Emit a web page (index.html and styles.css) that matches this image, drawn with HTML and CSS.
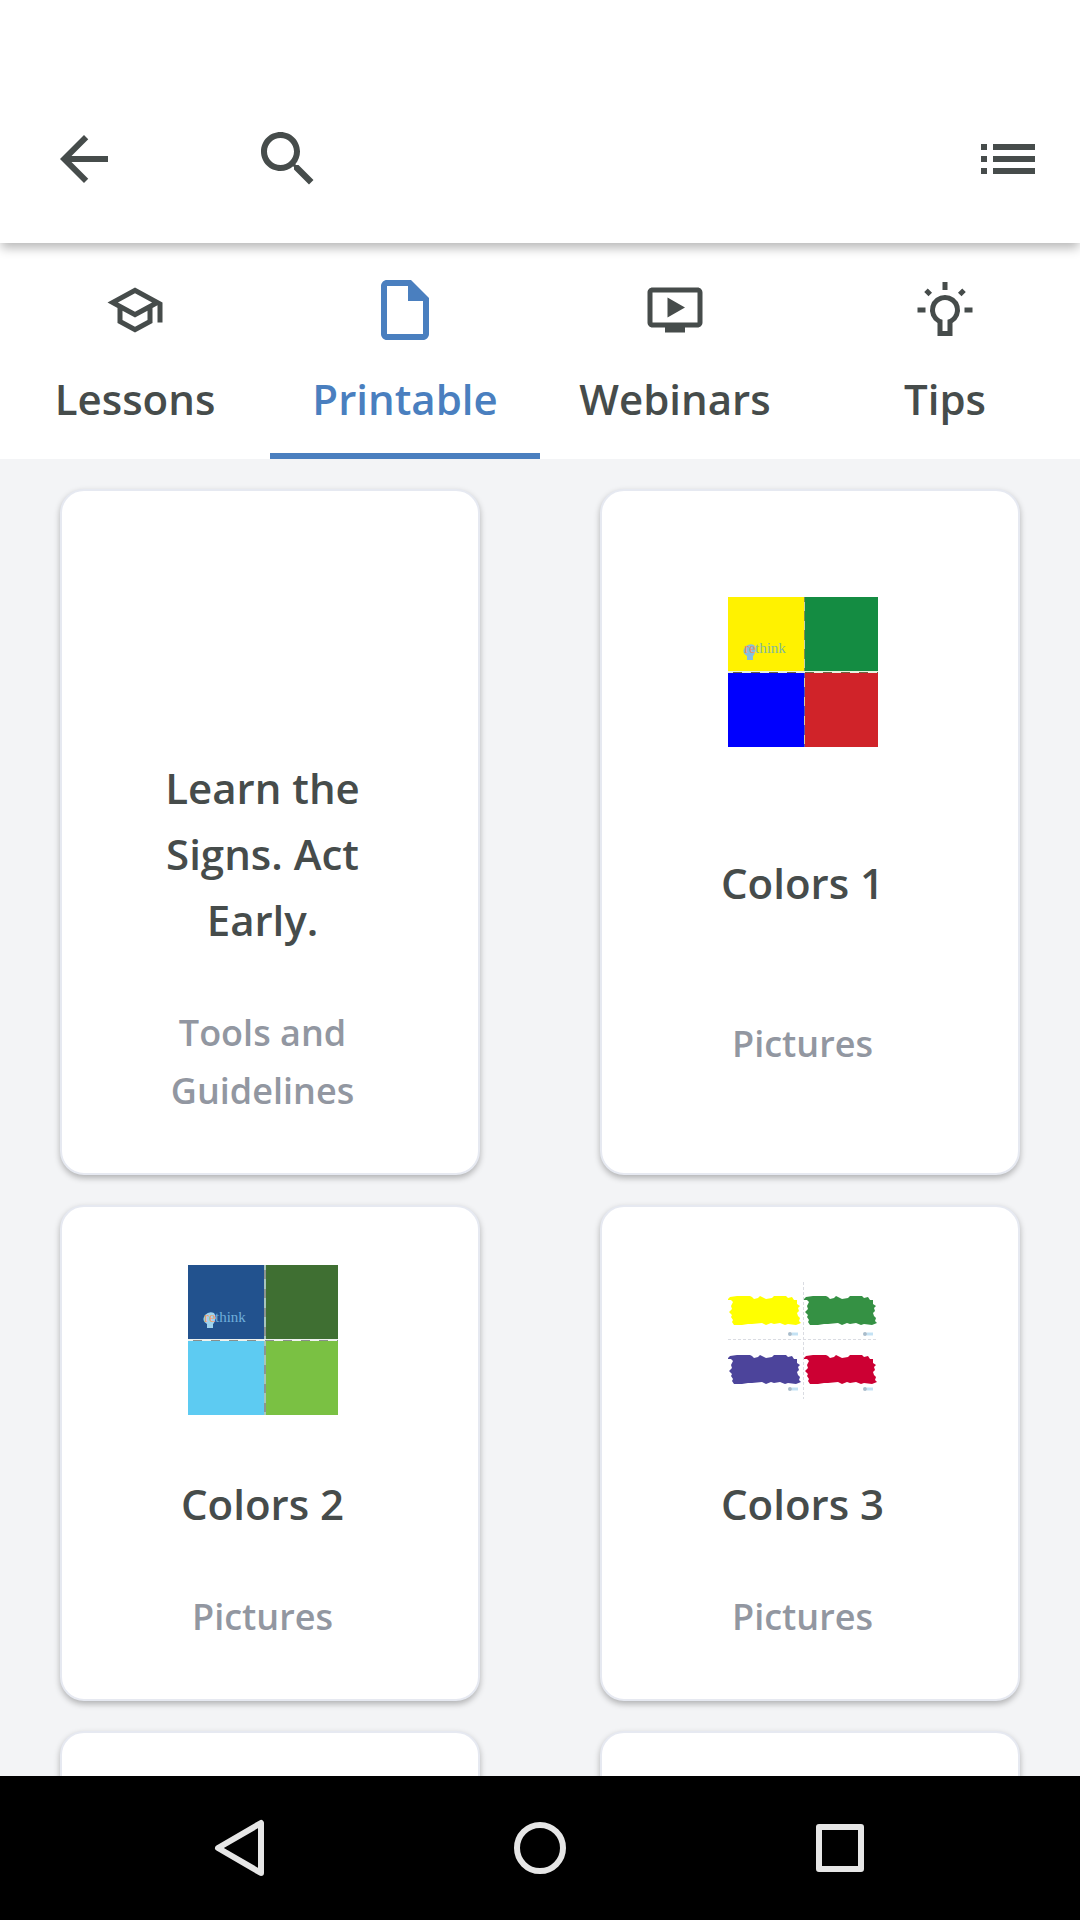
FILE: index.html
```html
<!DOCTYPE html>
<html lang="en">
<head>
  <meta charset="utf-8">
  <meta name="viewport" content="width=device-width, initial-scale=1">
  <title>Printable resources</title>
  <link rel="stylesheet" href="styles.css">
</head>
<body>
  <header class="topbar">
    <button class="icon-button" type="button" aria-label="Back">
      <svg class="icon" viewBox="0 0 24 24"><path d="M20 11H7.830l5.590-5.590L12 4l-8 8 8 8 1.410-1.410L7.830 13H20z"/></svg>
    </button>
    <button class="icon-button search" type="button" aria-label="Search">
      <svg class="icon" viewBox="0 0 24 24"><path d="M15.500 14h-.790l-.280-.270C15.410 12.590 16 11.110 16 9.500 16 5.910 13.090 3 9.500 3S3 5.910 3 9.500 5.910 16 9.500 16c1.610 0 3.090-.590 4.230-1.570l.270.280v.790l5 4.990L20.490 19zm-6 0C7.010 14 5 11.990 5 9.500S7.010 5 9.500 5 14 7.010 14 9.500 11.990 14 9.500 14z"/></svg>
    </button>
    <button class="icon-button menu" type="button" aria-label="List">
      <svg class="icon" viewBox="0 0 24 24"><path d="M3 13h2v-2H3zm0 4h2v-2H3zm0-8h2V7H3zm4 4h14v-2H7zm0 4h14v-2H7zM7 7v2h14V7z"/></svg>
    </button>
  </header>

  <nav class="tabs" aria-label="Resource types">
    <a class="tab" href="#lessons">
      <span class="tab-icon"><svg class="icon icon-small" viewBox="0 0 24 24"><path d="M12 3L1 9l4 2.180v6L12 21l7-3.820v-6l2-1.090V17h2V9zm6.820 6L12 12.720 5.180 9 12 5.280zM17 15.990l-5 2.730-5-2.730v-3.720L12 15l5-2.730z"/></svg></span>
      Lessons
    </a>
    <a class="tab tab-active" href="#printable" aria-current="page">
      <span class="tab-icon"><svg class="icon" viewBox="0 0 24 24"><path d="M14 2H6c-1.100 0-2 .9-2 2v16c0 1.100.9 2 2 2h12c1.100 0 2-.9 2-2V8zM6 20V4h7v5h5v11z"/></svg></span>
      Printable
    </a>
    <a class="tab" href="#webinars">
      <span class="tab-icon"><svg class="icon icon-small" viewBox="0 0 24 24"><path d="M21 3H3c-1.110 0-2 .89-2 2v12c0 1.100.89 2 2 2h5v2h8v-2h5c1.100 0 2-.9 2-2V5c0-1.100-.9-2-2-2zm0 14H3V5h18zm-5-6l-7 4V7z"/></svg></span>
      Webinars
    </a>
    <a class="tab" href="#tips">
      <span class="tab-icon"><svg class="icon icon-small" viewBox="0 0 24 24"><path fill-rule="evenodd" d="M12 6a6 6 0 0 0-3 11.200V22.400h6v-5.200A6 6 0 0 0 12 6zM13 20.400h-2v-4.530a4 4 0 1 1 2 0zM11 .8h2V4h-2zM1 11h3.200v2H1zM19.800 11H23v2h-3.200z"/><path d="M4.400 4.100l1.700 1.700M19.600 4.100l-1.700 1.700" stroke="currentColor" stroke-width="2"/></svg></span>
      Tips
    </a>
  </nav>

  <main class="content">
    <div class="grid">
      <article class="card">
        <div class="thumb"></div>
        <h2 class="card-title">Learn the Signs. Act Early.</h2>
        <p class="card-type">Tools and Guidelines</p>
      </article>

      <article class="card">
        <svg class="thumb" viewBox="0 0 150 150" role="img" aria-label="Yellow, green, blue and red squares">
          <path fill="#fff200" d="M0 0h77v75H0z"/>
          <path fill="#148c42" d="M77 0h73v75H77z"/>
          <path fill="#0000fe" d="M0 75h77v75H0z"/>
          <path fill="#d02329" d="M77 75h73v75H77z"/>
          <path stroke="#7e8a50" d="M76.500 0v75"/>
          <path stroke="#5a50a8" d="M76.500 76v74"/>
          <path stroke="#d0d0a8" stroke-dasharray="9 10" d="M76.500 5v145"/>
          <path stroke="#e8f2e0" stroke-width="2" d="M0 75h150"/>
          <path stroke="#6b6440" stroke-dasharray="9 9" d="M5 75.500h145"/>
          <path fill="#86bede" d="M17 50q4-4 9-2 3 4 0 10l-1 1v4h-6v-4q-6-3-2-9z"/>
          <text class="logo" x="16" y="56" fill="#e9905a">re</text>
          <text class="logo" x="27" y="56" fill="#83b99f">think</text>
        </svg>
        <h2 class="card-title">Colors 1</h2>
        <p class="card-type">Pictures</p>
      </article>

      <article class="card">
        <svg class="thumb" viewBox="0 0 150 150" role="img" aria-label="Navy, dark green, sky blue and light green squares">
          <path fill="#22528e" d="M0 0h77v75H0z"/>
          <path fill="#3f6f32" d="M77 0h73v75H77z"/>
          <path fill="#5dcbf2" d="M0 76h77v74H0z"/>
          <path fill="#7ac143" d="M77 76h73v74H77z"/>
          <path stroke="#a8c4bc" stroke-width="2" d="M77 0v150"/>
          <path stroke="#8c9490" stroke-width="2" stroke-dasharray="9 10" d="M77 5v145"/>
          <path stroke="#eef2ee" stroke-width="2" d="M0 75h150"/>
          <path stroke="#8a8f8c" stroke-dasharray="9 9" d="M5 75.500h145"/>
          <path fill="#9fd3ee" d="M17 50q4-4 9-2 3 4 0 10l-1 1v4h-6v-4q-6-3-2-9z"/>
          <text class="logo" x="16" y="57" fill="#f0a06a">re</text>
          <text class="logo" x="27" y="57" fill="#6faedb">think</text>
        </svg>
        <h2 class="card-title">Colors 2</h2>
        <p class="card-type">Pictures</p>
      </article>

      <article class="card">
        <svg class="thumb" viewBox="0 0 150 150" role="img" aria-label="Yellow, green, purple and red paint strokes">
          <defs>
            <path id="stroke" d="M0 4L2 2 9 1 22 1 24 2 26 4 30 3 32 1 34 2 38 4 44 3 46 1 58 1 60 3 64 2 66 5 69 5 69 9 72 11 70 13 71 16 69 18 70 21 72 23 71 26 73 28 68 30 60 29 57 30 52 28 46 29 43 28 38 30 34 28 24 29 20 29 14 30 6 30 4 27 5 25 3 22 4 20 1 17 4 14 3 11 5 7 3 5 0 5z"/>
            <g id="mark">
              <circle cx="2" cy="2" r="2" fill="#a9bccb"/>
              <path stroke="#c4e2f4" stroke-width="3" d="M4 2h6"/>
            </g>
          </defs>
          <path stroke="#dadce2" stroke-dasharray="3 2" d="M75.500 17v117M0 74.500h150"/>
          <use href="#stroke" y="30" fill="#ff0"/>
          <use href="#stroke" x="76" y="30" fill="#359144"/>
          <use href="#stroke" y="89" fill="#4c449b"/>
          <use href="#stroke" x="76" y="89" fill="#cc0033"/>
          <use href="#mark" x="60" y="67"/>
          <use href="#mark" x="135" y="67"/>
          <use href="#mark" x="60" y="122"/>
          <use href="#mark" x="135" y="122"/>
        </svg>
        <h2 class="card-title">Colors 3</h2>
        <p class="card-type">Pictures</p>
      </article>

      <article class="card card-pending"></article>
      <article class="card card-pending"></article>
    </div>
  </main>

  <footer class="system-bar">
    <button class="system-button" type="button" aria-label="System back">
      <svg class="system-icon" viewBox="0 0 60 60"><path d="M51 5v50L8 30z"/></svg>
    </button>
    <button class="system-button" type="button" aria-label="Home">
      <svg class="system-icon" viewBox="0 0 60 60"><circle cx="30" cy="30" r="23"/></svg>
    </button>
    <button class="system-button" type="button" aria-label="Recent apps">
      <svg class="system-icon" viewBox="0 0 60 60"><path d="M9 9h42v42H9z"/></svg>
    </button>
  </footer>
</body>
</html>
```
FILE: styles.css
```css
* {
  box-sizing: border-box;
}

body {
  margin: 0;
  height: 100vh;
  display: flex;
  flex-direction: column;
  overflow: hidden;
  background: #f3f4f6;
  color: #464c4b;
  font-family: "Open Sans", sans-serif;
  font-weight: 600;
}

button {
  padding: 0;
  border: 0;
  background: none;
  color: inherit;
}

/* Top bar */
.topbar {
  position: relative;
  z-index: 1;
  flex: none;
  display: flex;
  align-items: center;
  padding: 123px 36px 48px 48px;
  background: #fff;
  box-shadow: 0 6px 10px -1px rgba(0, 0, 0, 0.28);
}

.icon-button {
  display: flex;
}

.search {
  margin-left: 132px;
}

.menu {
  margin-left: auto;
}

.icon {
  width: 72px;
  height: 72px;
  fill: currentColor;
}

.icon-small {
  width: 60px;
  height: 60px;
}

/* Tabs */
.tabs {
  flex: none;
  display: grid;
  grid-template-columns: repeat(4, 1fr);
  background: #fff;
}

.tab {
  display: flex;
  flex-direction: column;
  align-items: center;
  gap: 20px;
  padding: 31px 0 21px;
  border-bottom: 6px solid transparent;
  color: inherit;
  font-size: 42px;
  line-height: 66px;
  text-decoration: none;
}

.tab-active {
  border-color: #4a7fbf;
  color: #4a7fbf;
}

.tab-icon {
  display: flex;
  align-items: center;
  height: 72px;
}

/* Resource cards */
.content {
  flex: 1;
  min-height: 0;
  overflow-y: auto;
  scrollbar-width: none;
}

.grid {
  display: grid;
  grid-template-columns: 1fr 1fr;
  gap: 30px 120px;
  padding: 30px 60px;
}

.card {
  display: flex;
  flex-direction: column;
  align-items: center;
  justify-content: space-evenly;
  padding: 58px 66px 53px 51px;
  border: 2px solid #e6e9f1;
  border-radius: 24px;
  background: #fff;
  box-shadow: 0 3px 6px rgba(0, 0, 0, 0.28);
  text-align: center;
}

.card-pending {
  min-height: 496px;
}

.thumb {
  width: 150px;
  height: 150px;
  fill: none;
}

.logo {
  font-family: "Liberation Serif", serif;
  font-size: 15px;
  font-weight: 400;
}

.card-title {
  margin: 56px 0 51px;
  font-size: 42px;
  font-weight: 600;
  line-height: 66px;
}

.card-type {
  margin: 0;
  color: #9297a1;
  font-size: 36px;
  line-height: 58px;
}

/* System navigation */
.system-bar {
  flex: none;
  display: grid;
  grid-template-columns: repeat(3, 1fr);
  padding: 42px 90px;
  background: #000;
}

.system-button {
  display: flex;
  justify-content: center;
}

.system-icon {
  width: 60px;
  height: 60px;
  fill: none;
  stroke: #e6e6e6;
  stroke-width: 6;
  stroke-linejoin: round;
}
```
